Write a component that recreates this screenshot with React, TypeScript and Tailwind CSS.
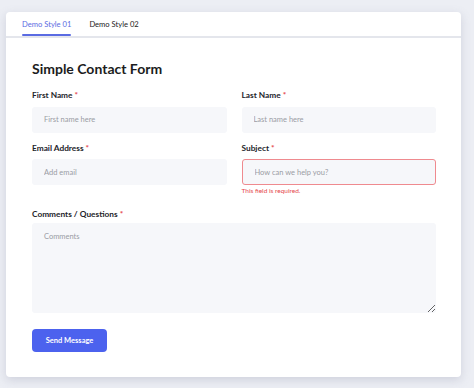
export default function App() {
  return (
    <div
      className="w-[474px] h-[388px] overflow-hidden bg-[#eceef4] pt-[12px] pl-[6px]"
      style={{ fontFamily: 'Lato, Inter, sans-serif' }}
    >
      <div className="w-[455px] h-[365px] bg-white rounded-[4px] shadow-[0_3px_10px_rgba(120,125,150,0.25)]">
        {/* tabs */}
        <div className="flex h-[26px] pl-[16px] border-b-2 border-[#e4e6ec]">
          <div className="relative pt-[7px] text-[7.6px] leading-[10px] text-[#5a6be2]">
            Demo Style 01
            <span className="absolute left-0 right-0 bottom-[0px] h-[2px] bg-[#5a6be2] rounded-full" />
          </div>
          <div className="ml-[18px] pt-[7px] text-[7.6px] leading-[10px] text-[#222]">Demo Style 02</div>
        </div>

        <div className="pl-[26px] pr-[25px] pt-[22px]">
          <h1 className="text-[14px] leading-[18px] font-bold text-[#1b1c20]">Simple Contact Form</h1>

          <div className="grid grid-cols-2 gap-x-[15px] mt-[12px]">
            <Field label="First Name" placeholder="First name here" />
            <Field label="Last Name" placeholder="Last name here" />
          </div>

          <div className="grid grid-cols-2 gap-x-[15px] mt-[10px]">
            <Field label="Email Address" placeholder="Add email" />
            <div>
              <Label text="Subject" />
              <input
                placeholder="How can we help you?"
                className="w-full h-[26px] rounded-[3px] bg-[#f6f7fa] border border-[#ef8a8f] px-[12px] text-[7.5px] placeholder-[#9a9ca4] outline-none"
              />
              <p className="mt-[2px] text-[6.5px] leading-[8px] text-[#e5484d]">This field is required.</p>
            </div>
          </div>

          <div className="mt-[14px]">
            <Label text="Comments / Questions" />
            <textarea
              placeholder="Comments"
              className="block w-full h-[90px] rounded-[3px] bg-[#f6f7fa] px-[12px] py-[9px] text-[7.5px] leading-[10px] placeholder-[#9a9ca4] outline-none resize-y"
            />
          </div>

          <button className="mt-[16px] w-[75px] h-[23px] rounded-[4px] bg-[#4c62ee] text-white text-[7.5px] font-bold">
            Send Message
          </button>
        </div>
      </div>
    </div>
  );
}

function Label({ text }: { text: string }) {
  return (
    <div className="text-[8.3px] leading-[10px] font-bold text-[#23242a] mb-[4px]">
      {text} <span className="text-[#e5484d]">*</span>
    </div>
  );
}

function Field({ label, placeholder }: { label: string; placeholder: string }) {
  return (
    <div>
      <Label text={label} />
      <input
        placeholder={placeholder}
        className="w-full h-[26px] rounded-[3px] bg-[#f6f7fa] px-[12px] text-[7.5px] placeholder-[#9a9ca4] outline-none"
      />
    </div>
  );
}
